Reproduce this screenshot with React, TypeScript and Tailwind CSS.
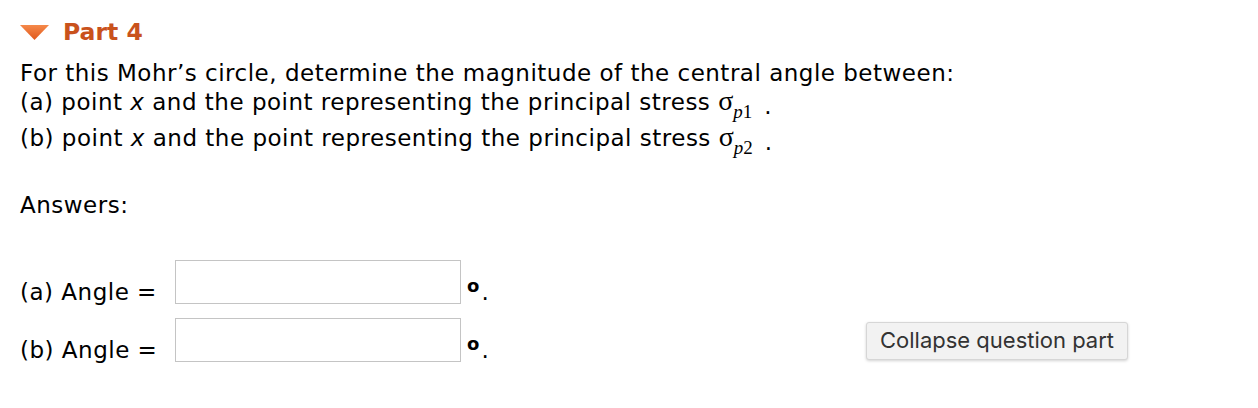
import React from "react";

// Question part panel: Mohr's circle central angle answers.
const body = { fontFamily: '"DejaVu Sans", Verdana, sans-serif' };
const serif = { fontFamily: '"Liberation Serif", "Times New Roman", serif' };

function Sigma({ n }: { n: string }) {
  return (
    <span className="whitespace-nowrap tracking-normal">
      <span className="text-[28px]" style={serif}>
        σ
      </span>
      <span className="relative top-[8px] text-[19px]" style={serif}>
        <i>p</i>
        {n}
      </span>
      <span className="relative top-[4px] ml-[12px]">.</span>
    </span>
  );
}

function AnswerRow({ label }: { label: string }) {
  return (
    <div className="flex items-end leading-[23px]">
      <span className="w-[155px]">{label} =</span>
      <input
        type="text"
        className="h-[44px] w-[286px] border border-[#c4c4c4] bg-white outline-none"
      />
      <span className="mb-[9px] ml-[6px] text-[18px] font-bold leading-none tracking-normal">o</span>
      <span className="ml-[2px]">.</span>
    </div>
  );
}

export default function App() {
  return (
    <div
      className="h-[408px] w-[1258px] bg-white pl-[20px] text-[23px] tracking-[0.5px] text-black"
      style={body}
    >
      <div className="flex items-center pt-[18px] tracking-normal">
        <svg width="29" height="16" viewBox="0 0 29 16" className="mt-[2px]">
          <defs>
            <linearGradient id="tri" x1="0" y1="0" x2="0" y2="1">
              <stop offset="0" stopColor="#f5894a" />
              <stop offset="1" stopColor="#e0581c" />
            </linearGradient>
          </defs>
          <polygon points="0,0 29,0 14.5,15" fill="url(#tri)" />
        </svg>
        <span className="ml-[14px] text-[23.5px] font-bold leading-[28px] text-[#c9521c]">Part 4</span>
      </div>

      <div className="mt-[14px] leading-[27px]">
        <div>For this Mohr’s circle, determine the magnitude of the central angle between:</div>
        <div className="h-[36px]">
          (a) point <i>x</i> and the point representing the principal stress <Sigma n="1" />
        </div>
        <div className="h-[37px]">
          (b) point <i>x</i> and the point representing the principal stress <Sigma n="2" />
        </div>
      </div>

      <div className="mt-[32px] leading-[27px]">Answers:</div>

      <div className="mt-[41px] flex flex-col gap-[14px]">
        <AnswerRow label="(a) Angle" />
        <div className="flex items-center">
          <AnswerRow label="(b) Angle" />
          <button
            type="button"
            className="ml-auto mr-[130px] mt-[1px] h-[38px] w-[262px] rounded-[3px] border border-[#d6d6d6] bg-[#f2f2f2] text-[22px] tracking-normal text-[#333] shadow-[0_1px_3px_rgba(0,0,0,0.18)]"
            style={{ fontFamily: 'Inter, "Liberation Sans", sans-serif' }}
          >
            Collapse question part
          </button>
        </div>
      </div>
    </div>
  );
}
